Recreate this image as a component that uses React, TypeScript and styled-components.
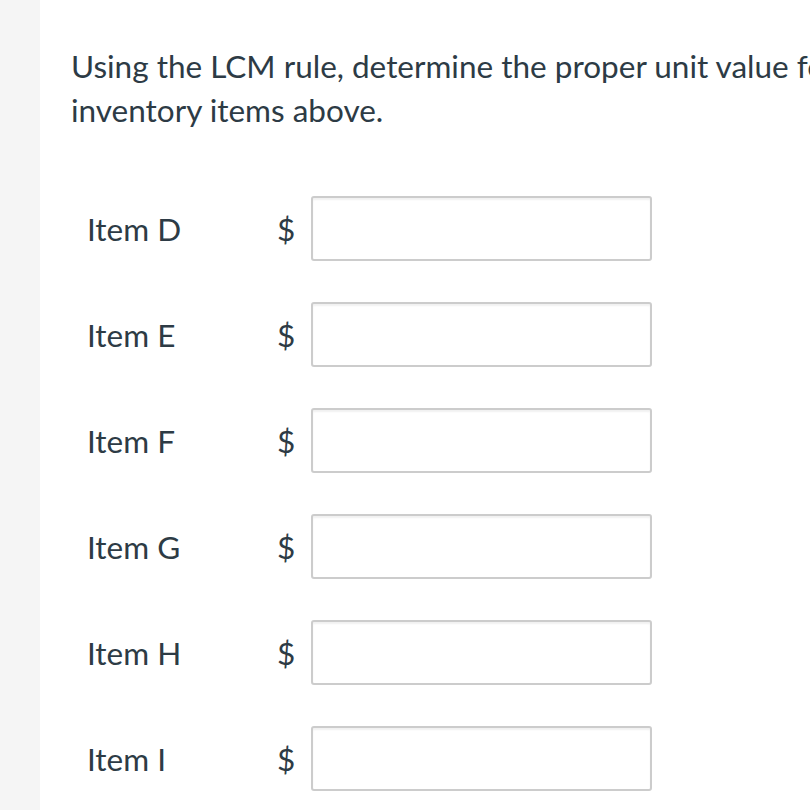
import React from 'react';
import styled, { createGlobalStyle } from 'styled-components';

const GlobalStyle = createGlobalStyle`
  html, body {
    margin: 0;
    padding: 0;
    background: #ffffff;
    overflow: hidden;
  }
  body {
    font-family: Lato, "Open Sans", sans-serif;
    color: #2d3b45;
  }
`;

const Page = styled.div`
  display: flex;
  width: 810px;
  height: 810px;
  overflow: hidden;
`;

const Sidebar = styled.div`
  flex: 0 0 40px;
  background: #f5f5f5;
`;

const Content = styled.div`
  flex: 0 0 auto;
  padding: 44px 0 0 31px;
`;

const Question = styled.p`
  margin: 0;
  font-size: 31.5px;
  line-height: 44px;
  white-space: nowrap;
`;

const Rows = styled.div`
  display: flex;
  flex-direction: column;
  gap: 41px;
  margin-top: 64px;
  padding-left: 16px;
`;

const Row = styled.div`
  display: flex;
  align-items: center;
  height: 65px;
`;

const Label = styled.span`
  width: 190px;
  font-size: 31.5px;
`;

const Dollar = styled.span`
  font-size: 31.5px;
  margin-right: 16px;
`;

const Field = styled.input`
  box-sizing: border-box;
  width: 341px;
  height: 65px;
  border: 2px solid #cccccc;
  border-radius: 3px;
  box-shadow: inset 0 2px 2px rgba(0, 0, 0, 0.06);
  background: #ffffff;
  outline: none;
`;

const items = ['D', 'E', 'F', 'G', 'H', 'I'];

const App: React.FC = () => {
  return (
    <>
      <GlobalStyle />
      <Page>
        <Sidebar />
        <Content>
          <Question>
            Using the LCM rule, determine the proper unit value for the
            <br />
            inventory items above.
          </Question>
          <Rows>
            {items.map((id) => (
              <Row key={id}>
                <Label>Item {id}</Label>
                <Dollar>$</Dollar>
                <Field type="text" aria-label={`Item ${id}`} />
              </Row>
            ))}
          </Rows>
        </Content>
      </Page>
    </>
  );
};

export default App;
